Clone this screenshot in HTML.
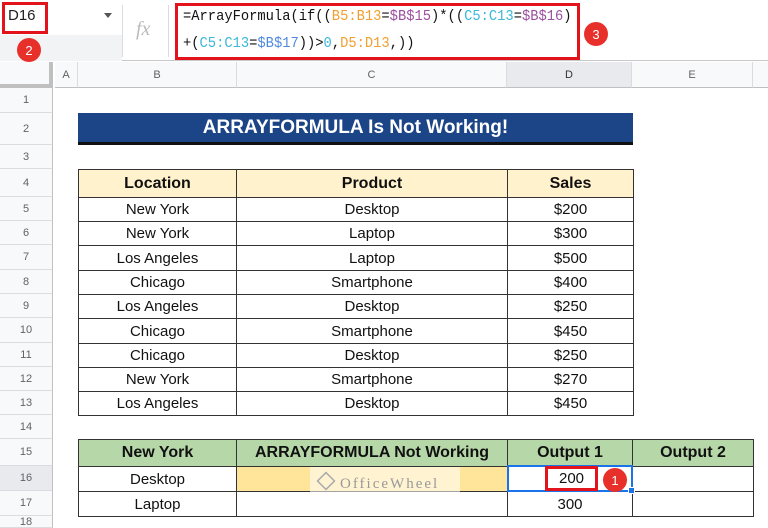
<!DOCTYPE html>
<html><head><meta charset="utf-8"><style>
*{margin:0;padding:0;box-sizing:border-box}
body{width:768px;height:525px;overflow:hidden;background:#fff;font-family:"Liberation Sans",Arial,sans-serif;position:relative}
.a{position:absolute}
.rh{position:absolute;left:0;width:53px;background:#f8f9fa;border-bottom:1px solid #dadce0;border-right:1px solid #c0c0c0;color:#5f6368;font-size:11px;display:flex;align-items:center;justify-content:center}
.ch{position:absolute;top:62px;height:26px;background:#f8f9fa;border-right:1px solid #dadce0;border-bottom:1px solid #c0c0c0;color:#5f6368;font-size:11px;display:flex;align-items:center;justify-content:center}
table{position:absolute;border-collapse:collapse;font-size:15px;color:#111;table-layout:fixed}
td{border:1px solid #333;text-align:center;padding:0;white-space:nowrap;overflow:hidden}
.badge{position:absolute;width:24px;height:24px;border-radius:50%;background:#e8302b;color:#fff;font-size:13px;display:flex;align-items:center;justify-content:center}
.mono{font-family:"Liberation Mono",monospace;font-size:13.8px;color:#111}
</style></head><body>
<div class="a" style="left:0;top:0;width:768px;height:61px;background:#fff;border-bottom:1px solid #c8c8c8"></div>
<div class="a" style="left:0;top:35px;width:122px;height:26px;background:#f1f3f4"></div>
<div class="a" style="left:122px;top:5px;width:1px;height:52px;background:#dadce0"></div>
<div class="a" style="left:2px;top:2px;width:46px;height:32px;border:3px solid #e3131b"></div>
<div class="a" style="left:8px;top:7px;font-size:15px;color:#222">D16</div>
<div class="a" style="left:104px;top:13px;width:0;height:0;border-left:4px solid transparent;border-right:4px solid transparent;border-top:5px solid #555"></div>
<div class="badge" style="left:17px;top:38px">2</div>
<div class="a" style="left:136px;top:18px;font-family:'Liberation Serif',serif;font-style:italic;font-size:20px;color:#bbb">fx</div>
<div class="a" style="left:168px;top:5px;width:1px;height:52px;background:#dadce0"></div>
<div class="a" style="left:175px;top:3px;width:405px;height:57px;border:3px solid #e3131b"></div>
<div class="a mono" style="left:183px;top:9px;font-size:14.5px;transform:scaleX(.95);transform-origin:left">=ArrayFormula(if((<span style="color:#f0a030">B5:B13</span>=<span style="color:#9c4fa0">$B$15</span>)*((<span style="color:#3cb8d8">C5:C13</span>=<span style="color:#9c4fa0">$B$16</span>)</div>
<div class="a mono" style="left:183px;top:36px;font-size:14.5px;transform:scaleX(.95);transform-origin:left">+(<span style="color:#3cb8d8">C5:C13</span>=<span style="color:#4f8ae0">$B$17</span>))&gt;<span style="color:#3cb8d8">0</span>,<span style="color:#f0a030">D5:D13</span>,))</div>
<div class="badge" style="left:584px;top:22px">3</div>
<div class="a" style="left:0;top:62px;width:53px;height:26px;background:#f8f9fa;border-right:4px solid #c0c0c0;border-bottom:4px solid #c0c0c0"></div>
<div class="ch" style="left:55px;width:23px">A</div>
<div class="ch" style="left:78px;width:159px">B</div>
<div class="ch" style="left:237px;width:270px">C</div>
<div class="ch" style="left:507px;width:125px;background:#e8eaed;color:#333">D</div>
<div class="ch" style="left:632px;width:121px">E</div>
<div class="ch" style="left:753px;width:20px"></div>
<div class="rh" style="top:88px;height:25px">1</div>
<div class="rh" style="top:113px;height:32px">2</div>
<div class="rh" style="top:145px;height:24px">3</div>
<div class="rh" style="top:169px;height:28px">4</div>
<div class="rh" style="top:197px;height:24px">5</div>
<div class="rh" style="top:221px;height:24px">6</div>
<div class="rh" style="top:245px;height:25px">7</div>
<div class="rh" style="top:270px;height:24px">8</div>
<div class="rh" style="top:294px;height:24px">9</div>
<div class="rh" style="top:318px;height:25px">10</div>
<div class="rh" style="top:343px;height:24px">11</div>
<div class="rh" style="top:367px;height:24px">12</div>
<div class="rh" style="top:391px;height:24px">13</div>
<div class="rh" style="top:415px;height:24px">14</div>
<div class="rh" style="top:439px;height:27px">15</div>
<div class="rh" style="top:466px;height:25px;background:#e8eaed">16</div>
<div class="rh" style="top:491px;height:25px">17</div>
<div class="rh" style="top:516px;height:12px">18</div>
<div class="a" style="left:78px;top:113px;width:555px;height:32px;background:#1c4587;border-bottom:3px solid #111;color:#fff;font-weight:bold;font-size:19px;display:flex;align-items:center;justify-content:center">ARRAYFORMULA Is Not Working!</div>
<table style="left:78px;top:169px;width:555px">
<colgroup><col style="width:158px"><col style="width:271px"><col style="width:126px"></colgroup>
<tr style="height:28px;background:#fff2cc;font-weight:bold;font-size:16px"><td>Location</td><td>Product</td><td>Sales</td></tr>
<tr style="height:24px"><td>New York</td><td>Desktop</td><td>$200</td></tr>
<tr style="height:24px"><td>New York</td><td>Laptop</td><td>$300</td></tr>
<tr style="height:25px"><td>Los Angeles</td><td>Laptop</td><td>$500</td></tr>
<tr style="height:24px"><td>Chicago</td><td>Smartphone</td><td>$400</td></tr>
<tr style="height:24px"><td>Los Angeles</td><td>Desktop</td><td>$250</td></tr>
<tr style="height:25px"><td>Chicago</td><td>Smartphone</td><td>$450</td></tr>
<tr style="height:24px"><td>Chicago</td><td>Desktop</td><td>$250</td></tr>
<tr style="height:24px"><td>New York</td><td>Smartphone</td><td>$270</td></tr>
<tr style="height:24px"><td>Los Angeles</td><td>Desktop</td><td>$450</td></tr>
</table>
<table style="left:78px;top:439px;width:675px">
<colgroup><col style="width:158px"><col style="width:271px"><col style="width:125px"><col style="width:121px"></colgroup>
<tr style="height:27px;background:#b6d7a8;font-weight:bold;font-size:16px"><td>New York</td><td>ARRAYFORMULA Not Working</td><td>Output 1</td><td>Output 2</td></tr>
<tr style="height:25px"><td>Desktop</td><td style="background:#ffe599"></td><td></td><td></td></tr>
<tr style="height:25px"><td>Laptop</td><td></td><td>300</td><td></td></tr>
</table>
<div class="a" style="left:310px;top:467px;width:150px;height:30px;background:rgba(255,255,255,0.55)"></div>
<div class="a" style="left:317px;top:472px;width:18px;height:18px;border:2px solid #aaa;transform:rotate(45deg) scale(.75)"></div>
<div class="a" style="left:340px;top:476px;font-family:'Liberation Serif',serif;font-size:15px;color:#999;letter-spacing:2px">OfficeWheel</div>
<div class="a" style="left:507px;top:465px;width:126px;height:27px;border:2px solid #1a73e8"></div>
<div class="a" style="left:628px;top:487px;width:7px;height:7px;background:#1a73e8;border:1px solid #fff"></div>
<div class="a" style="left:545px;top:466px;width:53px;height:25px;border:3px solid #e3131b;display:flex;align-items:center;justify-content:center;font-size:15px;color:#111">200</div>
<div class="badge" style="left:603px;top:468px">1</div>
</body></html>
